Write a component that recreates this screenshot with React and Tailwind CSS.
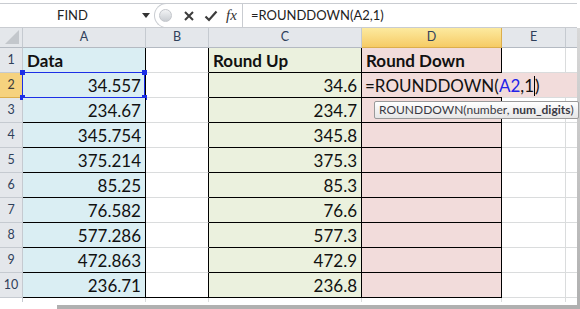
import React from 'react';
import clsx from 'clsx';

const colA = ['34.557', '234.67', '345.754', '375.214', '85.25', '76.582', '577.286', '472.863', '236.71'];
const colC = ['34.6', '234.7', '345.8', '375.3', '85.3', '76.6', '577.3', '472.9', '236.8'];

const hdr = 'h-[20px] border-r border-b border-r-[#c5cad0] border-b-[#b4bac2] flex items-center justify-center text-[12.5px] text-[#2f405a]';
const cell = 'h-[25px] border-r border-b flex items-end pb-[1px] px-[4px] text-[17px] leading-[20px] text-[#111]';

const FormulaBar = () => (
  <div className="h-[25px] flex border-t border-b border-[#c9ccd1] mt-[3px] bg-white mr-[3px] text-[13px] text-[#222]">
    <div className="w-[154px] flex items-center relative">
      <span className="flex-1 text-center pl-[3px]">FIND</span>
      <svg width="8" height="5" viewBox="0 0 8 5" className="mr-[4px]">
        <path d="M0 0 H8 L4 5 Z" fill="#333" />
      </svg>
    </div>
    <div className="w-[88px] flex items-center border-l border-[#c9ccd1] rounded-l-full -my-px border-y">
      <div className="ml-[4px] w-[13px] h-[13px] rounded-full bg-gradient-to-b from-[#f2f3f5] to-[#c9cdd2] border border-[#c3c6cb]" />
      <svg width="12" height="12" viewBox="0 0 12 12" className="ml-[11px]">
        <path d="M2 2 L10 10 M10 2 L2 10" stroke="#3c3c3c" strokeWidth="2" />
      </svg>
      <svg width="14" height="12" viewBox="0 0 14 12" className="ml-[9px]">
        <path d="M1.5 6.5 L5 10 L12.5 1.5" stroke="#3c3c3c" strokeWidth="2.2" fill="none" />
      </svg>
      <span className="ml-[8px] italic text-[15px] leading-none font-['Liberation_Serif',serif] text-[#333]">fx</span>
    </div>
    <div className="flex-1 border-l border-[#c9ccd1] flex items-center pl-[8px]">=ROUNDDOWN(A2,1)</div>
  </div>
);

export default function App() {
  return (
    <div className="w-[580px] h-[309px] bg-white overflow-hidden flex flex-col font-['Lato',sans-serif]">
      <div className="h-[28px] flex flex-col bg-[#e2e5e9]">
        <div className="bg-white">
          <FormulaBar />
        </div>
      </div>
      <div className="flex flex-1">
        <div className="flex-1 flex flex-col">
          <div className="grid grid-cols-[23px_123px_63px_153px_140px_64px_1fr]">
            <div className={clsx(hdr, 'relative bg-[#e4e7eb]')}>
              <svg width="14" height="14" viewBox="0 0 14 14" className="absolute right-[3px] bottom-[3px]">
                <path d="M14 0 L14 14 L0 14 Z" fill="#c3c7cc" />
              </svg>
            </div>
            <div className={clsx(hdr, 'bg-[#e4e7eb]')}>A</div>
            <div className={clsx(hdr, 'bg-[#e4e7eb]')}>B</div>
            <div className={clsx(hdr, 'bg-[#e4e7eb]')}>C</div>
            <div className={clsx(hdr, 'bg-gradient-to-b from-[#fcea9f] to-[#f6cb64] border-r-[#dcae4c] border-b-[#dcae4c]')}>D</div>
            <div className={clsx(hdr, 'bg-[#e4e7eb]')}>E</div>
            <div className={clsx(hdr, 'bg-[#e4e7eb] border-r-0')} />

            {/* row 1 */}
            <div className="h-[25px] border-r border-b border-r-[#c5cad0] border-b-[#c5cad0] bg-[#e4e7eb] flex items-center justify-center text-[12.5px] text-[#2f405a]">1</div>
            <div className={clsx(cell, 'bg-[#daeef3] border-black font-bold')}>Data</div>
            <div className={clsx(cell, 'bg-white border-b-[#dadcdd] border-r-black')} />
            <div className={clsx(cell, 'bg-[#ebf1de] border-black font-bold')}>Round Up</div>
            <div className={clsx(cell, 'bg-[#f2dcdb] border-black font-bold')}>Round Down</div>
            <div className={clsx(cell, 'bg-white border-[#dadcdd]')} />
            <div className={clsx(cell, 'bg-white border-b-[#dadcdd] border-r-0')} />

            {colA.map((a, i) => (
              <React.Fragment key={i}>
                <div
                  className={clsx(
                    'h-[25px] border-r border-b flex items-center justify-center text-[12.5px]',
                    i === 0
                      ? 'bg-[#f6d27e] border-r-[#dcae4c] border-b-[#dcae4c] text-[#3b3b3b]'
                      : 'bg-[#e4e7eb] border-r-[#c5cad0] border-b-[#c5cad0] text-[#2f405a]'
                  )}
                >
                  {i + 2}
                </div>
                <div className={clsx(cell, 'bg-[#daeef3] border-black justify-end relative')}>
                  {a}
                  {i === 0 && (
                    <div className="absolute -left-[1px] -top-[1px] w-[123px] h-[26px] border border-[#1c2fe6]">
                      <div className="absolute -left-[3px] -top-[3px] w-[5px] h-[5px] bg-[#1c2fe6]" />
                      <div className="absolute -right-[3px] -top-[3px] w-[5px] h-[5px] bg-[#1c2fe6]" />
                      <div className="absolute -left-[3px] -bottom-[3px] w-[5px] h-[5px] bg-[#1c2fe6]" />
                      <div className="absolute -right-[3px] -bottom-[3px] w-[5px] h-[5px] bg-[#1c2fe6]" />
                    </div>
                  )}
                </div>
                <div className={clsx(cell, 'bg-white border-r-black', i === 8 ? 'border-b-black' : 'border-b-[#dadcdd]')} />
                <div className={clsx(cell, 'bg-[#ebf1de] border-black justify-end')}>{colC[i]}</div>
                <div className={clsx(cell, 'bg-[#f2dcdb] border-black relative')}>
                  {i === 0 && (
                    <>
                      <div className="absolute left-0 top-0 w-[215px] h-[24px] bg-[#f2dcdb] z-10 flex items-end pl-[3px] pb-[1px] text-[17px] leading-[20px] text-[#111]">
                        <span>=ROUNDDOWN(</span>
                        <span className="text-[#2323e8]">A2</span>
                        <span>,1</span>
                        <span className="w-px h-[20px] bg-black self-center mt-[3px]" />
                        <span>)</span>
                      </div>
                      <div className="absolute left-[12px] top-[28px] z-20 h-[18px] px-[4px] flex items-center whitespace-nowrap rounded-[2px] border border-[#9a9a9a] bg-gradient-to-b from-white to-[#e6e6e6] text-[12px] text-[#3a3a44]">
                        ROUNDDOWN(number, <b className="ml-[3px]">num_digits</b>)
                      </div>
                    </>
                  )}
                </div>
                <div className={clsx(cell, 'bg-white border-[#dadcdd]')} />
                <div className={clsx(cell, 'bg-white border-b-[#dadcdd] border-r-0')} />
              </React.Fragment>
            ))}

            {/* partial row 11 */}
            <div className="h-[4px] border-r border-[#c5cad0] bg-white" />
            <div className="h-[4px] border-r border-[#dadcdd]" />
            <div className="h-[4px] border-r border-[#dadcdd]" />
            <div className="h-[4px] border-r border-[#dadcdd]" />
            <div className="h-[4px] border-r border-[#dadcdd]" />
            <div className="h-[4px] border-r border-[#dadcdd]" />
            <div className="h-[4px]" />
          </div>
        </div>
        <div className="w-[3px] bg-gradient-to-b from-[#d8d8d8] to-[#b0b0b0]" />
      </div>
      <div className="h-[4px] flex">
        <div className="w-[57px] bg-white" />
        <div className="flex-1 bg-[#b0b0b0]" />
      </div>
    </div>
  );
}
